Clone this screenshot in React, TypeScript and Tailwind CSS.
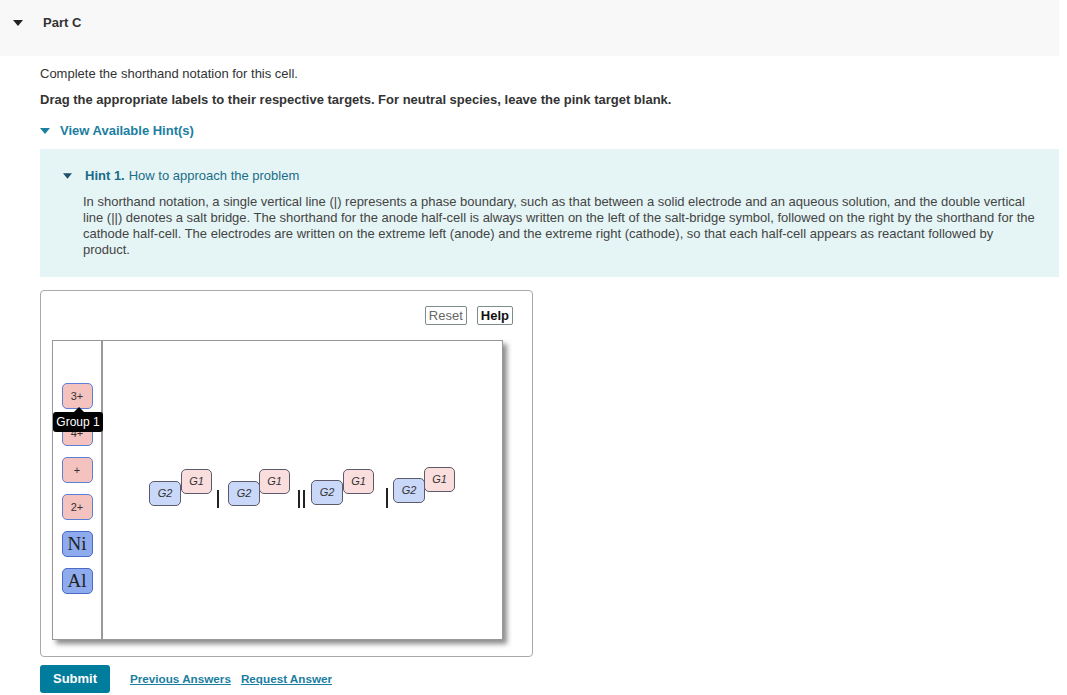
import React from "react";

function Tri({ className }: { className?: string }) {
  return (
    <svg width="10" height="6" viewBox="0 0 10 6" className={className}>
      <polygon points="0,0 10,0 5,6" fill="currentColor" />
    </svg>
  );
}

function Label({ text, kind }: { text: string; kind: "pink" | "blue" }) {
  if (kind === "pink") {
    return (
      <div className="w-[31px] h-[26px] rounded-[5px] border border-[#5b7fd6] bg-[#f4c3c0] flex items-center justify-center text-[11px] text-[#333]">
        {text}
      </div>
    );
  }
  return (
    <div className="w-[31px] h-[26px] rounded-[5px] border border-[#4a6cc6] bg-[#8eabee] flex items-center justify-center text-[19px] text-[#222] font-['Liberation_Serif',serif]">
      {text}
    </div>
  );
}

function Target({ text, x, y, kind }: { text: string; x: number; y: number; kind: "g1" | "g2" }) {
  const cls =
    kind === "g2"
      ? "absolute w-[32px] h-[25px] rounded-[5px] border border-[#5a5a6a] bg-[#c9d8f8] flex items-center justify-center text-[11px] italic text-[#333]"
      : "absolute w-[31px] h-[25px] rounded-[5px] border border-[#5a5a6a] bg-[#fadddd] flex items-center justify-center text-[11px] italic text-[#333]";
  return (
    <div className={cls} style={{ left: x, top: y }}>
      {text}
    </div>
  );
}

function VLine({ x, y, h }: { x: number; y: number; h: number }) {
  return <div className="absolute w-[2px] bg-[#222]" style={{ left: x, top: y, height: h }} />;
}

export default function App() {
  const ox = 52;
  const oy = 341;
  return (
    <div className="w-[1067px] min-h-[695px] bg-white font-['Liberation_Sans',Arial,sans-serif] text-[#333]">
      <div className="w-[1059px] h-[56px] bg-[#f8f8f8] flex items-start pt-[15px]">
        <div className="h-[16px] flex items-center">
          <Tri className="ml-[13px] text-[#222]" />
        </div>
        <span className="ml-[20px] text-[13px] leading-[16px] font-bold text-[#333]">Part C</span>
      </div>
      <div className="w-[1059px] pl-[40px]">
        <p className="mt-[10px] text-[13px] leading-[16px]">Complete the shorthand notation for this cell.</p>
        <p className="mt-[10px] text-[13px] leading-[16px] font-bold">
          Drag the appropriate labels to their respective targets. For neutral species, leave the pink target blank.
        </p>
        <div className="mt-[15px] flex items-center text-[#1b7ea1] text-[13px] font-bold leading-[16px]">
          <Tri className="text-[#1b7ea1]" />
          <span className="ml-[10px]">View Available Hint(s)</span>
        </div>
        <div className="mt-[10px] bg-[#e5f5f5] pt-[19px] pb-[19px] pl-[23px] pr-[19px]">
          <div className="flex items-center text-[13px] leading-[16px] text-[#1b6c88]">
            <Tri className="w-[9px] text-[#1b4f6a]" />
            <span className="ml-[13px] font-bold">Hint 1.</span>
            <span className="ml-[4px]">How to approach the problem</span>
          </div>
          <p className="mt-[10px] ml-[20px] text-[13px] leading-[16px] text-[#444]">
            In shorthand notation, a single vertical line (|) represents a phase boundary, such as that between a solid electrode and an aqueous solution, and the double vertical line (||) denotes a salt bridge. The shorthand for the anode half-cell is always written on the left of the salt-bridge symbol, followed on the right by the shorthand for the cathode half-cell. The electrodes are written on the extreme left (anode) and the extreme right (cathode), so that each half-cell appears as reactant followed by product.
          </p>
        </div>

        <div className="mt-[13px] w-[493px] h-[367px] border border-[#aaa] rounded-[4px] flex flex-col">
          <div className="flex justify-end gap-[10px] pr-[19px] pt-[15px]">
            <button className="h-[19px] px-[3px] border border-[#7d8c8c] rounded-[2px] text-[13px] leading-[17px] text-[#666] bg-white">
              Reset
            </button>
            <button className="h-[19px] px-[3px] border border-[#7d8c8c] rounded-[2px] text-[13px] leading-[17px] text-[#111] font-bold bg-white">
              Help
            </button>
          </div>
          <div className="ml-[11px] mt-[15px] w-[451px] h-[300px] border border-[#999] bg-white shadow-[4px_4px_5px_rgba(0,0,0,0.45)] flex relative">
            <div className="w-[50px] h-full border-r-2 border-[#999] flex flex-col items-center pt-[42px] gap-[11px]">
              <Label text="3+" kind="pink" />
              <Label text="4+" kind="pink" />
              <Label text="+" kind="pink" />
              <Label text="2+" kind="pink" />
              <Label text="Ni" kind="blue" />
              <Label text="Al" kind="blue" />
            </div>
            <div className="absolute left-[0px] top-[71px] w-[50px] h-[20px] bg-black rounded-[3px] text-white text-[12px] leading-[20px] text-center">
              Group 1
            </div>
            <div className="absolute left-[21px] top-[66px] w-0 h-0 border-l-[5px] border-r-[5px] border-b-[5px] border-l-transparent border-r-transparent border-b-black" />

            <Target kind="g2" text="G2" x={148 - ox} y={481 - oy} />
            <Target kind="g1" text="G1" x={180 - ox} y={469 - oy} />
            <VLine x={216 - ox} y={490 - oy} h={18} />
            <Target kind="g2" text="G2" x={227 - ox} y={481 - oy} />
            <Target kind="g1" text="G1" x={258 - ox} y={469 - oy} />
            <VLine x={297 - ox} y={490 - oy} h={18} />
            <VLine x={302 - ox} y={490 - oy} h={18} />
            <Target kind="g2" text="G2" x={310 - ox} y={480 - oy} />
            <Target kind="g1" text="G1" x={342 - ox} y={469 - oy} />
            <VLine x={385 - ox} y={488 - oy} h={20} />
            <Target kind="g2" text="G2" x={392 - ox} y={478 - oy} />
            <Target kind="g1" text="G1" x={423 - ox} y={467 - oy} />
          </div>
        </div>

        <div className="mt-[8px] flex items-center">
          <button className="w-[70px] h-[28px] bg-[#007c9c] rounded-[3px] text-white text-[13px] font-bold">Submit</button>
          <a className="ml-[20px] text-[11.7px] font-bold text-[#1b7ea1] underline">Previous Answers</a>
          <a className="ml-[10px] text-[11.7px] font-bold text-[#1b7ea1] underline">Request Answer</a>
        </div>
      </div>
    </div>
  );
}
